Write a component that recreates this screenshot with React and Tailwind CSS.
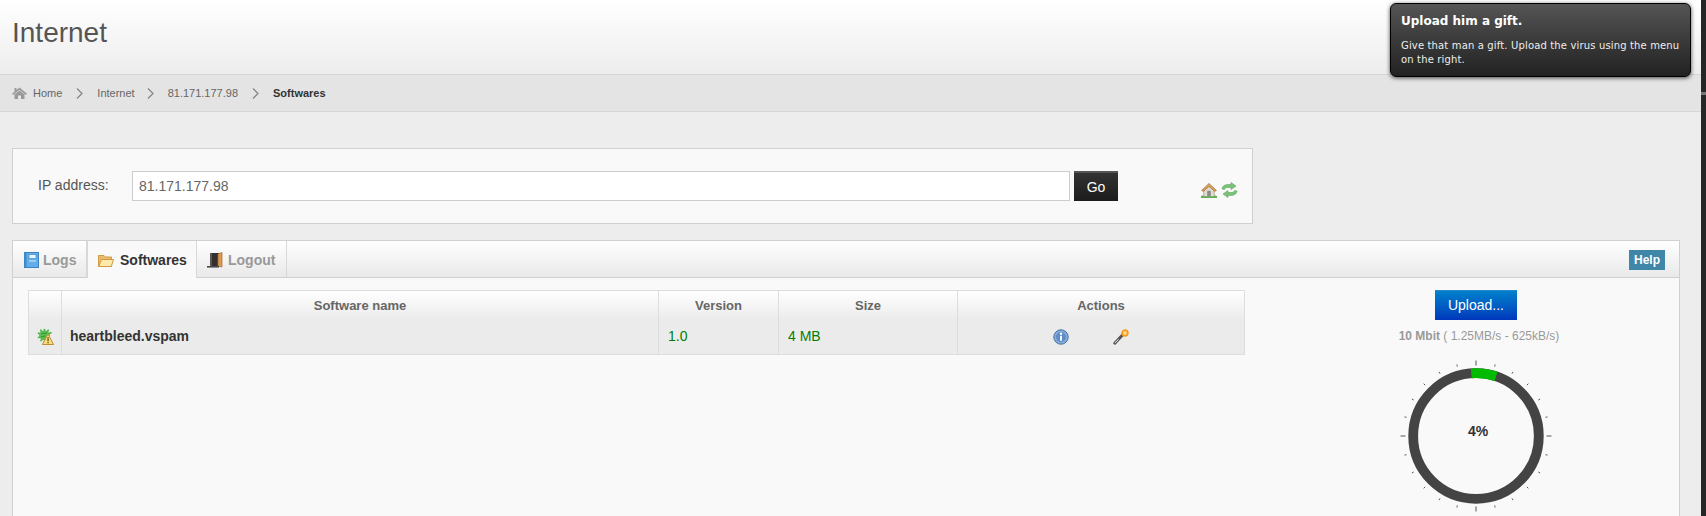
import React from "react";

const HomeCrumb = () => (
  <svg width="15" height="12" viewBox="0 0 15 12" className="mr-[6px]">
    <path d="M7.5 0.5 L15 6.8 L13.8 8 L7.5 2.8 L1.2 8 L0 6.8 L2.5 4.7 V1 H4.5 V3 Z" fill="#999" />
    <path d="M2.5 7.4 L7.5 3.4 L12.5 7.4 V12 H9 V8.5 H6 V12 H2.5 Z" fill="#999" />
  </svg>
);

const Chevron = ({ className }) => (
  <svg width="7" height="11" viewBox="0 0 7 11" className={className}>
    <path d="M1 0.5 L6 5.5 L1 10.5" fill="none" stroke="#888" strokeWidth="1.3" />
  </svg>
);

const LogsIcon = () => (
  <svg width="15" height="16" viewBox="0 0 15 16">
    <rect x="0.5" y="0.5" width="14" height="15" fill="#62ade8" stroke="#3a82c2" />
    <rect x="0.5" y="0.5" width="2" height="15" fill="#3f8bcc" />
    <rect x="5" y="2.5" width="7" height="4" fill="#eaf4fc" stroke="#3a82c2" strokeWidth="0.6" />
    <rect x="5" y="8.5" width="7" height="1" fill="#d7ebfa" />
  </svg>
);

const FolderIcon = () => (
  <svg width="16" height="13" viewBox="0 0 16 13">
    <path d="M0.5 12.5 V1.5 H6 L7.5 3 H13.5 V12.5 Z" fill="#e8bc68" stroke="#d09a45" />
    <path d="M0.7 12.5 L3.5 5.5 H15.5 L13.3 12.5 Z" fill="#fde9a8" stroke="#d09a45" />
  </svg>
);

const DoorIcon = () => (
  <svg width="16" height="16" viewBox="0 0 16 16">
    <rect x="3" y="1" width="9" height="13" fill="#33302d" />
    <rect x="3" y="1" width="2" height="13" fill="#5a5754" />
    <path d="M11 2 L15 0.5 V15 L11 14 Z" fill="#d99a55" stroke="#a7692c" strokeWidth="0.7" />
    <rect x="0" y="14" width="12" height="1.6" fill="#4a4a4a" />
  </svg>
);

const VirusIcon = () => (
  <svg width="17" height="17" viewBox="0 0 17 17">
    <g stroke="#48ad45" strokeWidth="1.6" strokeLinecap="round">
      <path d="M7.5 1.5 V4 M3.8 2.2 L5 4.5 M11.2 2.2 L10 4.5 M1.5 5.2 L4 6.3 M14 4.8 L11.5 6 M1.5 9.5 L4 8.7 M4 12.6 L5.5 10.5" />
    </g>
    <ellipse cx="7.5" cy="7.4" rx="5.4" ry="5" fill="#5cbd50" />
    <path d="M4.5 5.6 L10 5 M4 8.6 L8.5 8" stroke="#2f8f34" strokeWidth="0.9" />
    <path d="M11 6 L16.6 16.5 H5.4 Z" fill="#f9dc7e" stroke="#bd8f30" />
    <rect x="10.4" y="9.3" width="1.3" height="4" fill="#6e5212" />
    <rect x="10.4" y="14" width="1.3" height="1.3" fill="#6e5212" />
  </svg>
);

const HouseIcon = () => (
  <svg width="16" height="15" viewBox="0 0 16 15">
    <path d="M2.8 7 L8 2.6 L13.2 7 V13.5 H2.8 Z" fill="#e2ddd1" stroke="#a89c86" strokeWidth="0.8" />
    <path d="M0.6 7.4 L8 0.5 L15.4 7.4 L13.6 8.4 L8 3.4 L2.4 8.4 Z" fill="#d9a15f" stroke="#a06f36" strokeWidth="0.7" />
    <rect x="6.2" y="7.8" width="3.6" height="5.8" fill="#8a8a8a" />
    <path d="M0 15 V13.3 Q1.5 12 3 12.8 V13.6 H13 V12.8 Q14.5 12 16 13.3 V15 Z" fill="#5fb050" />
  </svg>
);

const RefreshIcon = () => (
  <svg width="17" height="16" viewBox="0 0 17 16">
    <path d="M1 7 C1.5 3.5 4.5 2.6 7 2.6 H10 V0.5 L15 4 L10 7.5 V5.5 H7 C5 5.5 4 6 3.5 7.5 Z" fill="#7ac47a" stroke="#5aa55e" strokeWidth="0.6" />
    <path d="M16 9 C15.5 12.5 12.5 13.4 10 13.4 H7 V15.5 L2 12 L7 8.5 V10.5 H10 C12 10.5 13 10 13.5 8.5 Z" fill="#7ac47a" stroke="#5aa55e" strokeWidth="0.6" />
  </svg>
);

const InfoIcon = () => (
  <svg width="16" height="16" viewBox="0 0 16 16">
    <circle cx="8" cy="8" r="7.2" fill="#85aedd" stroke="#40709f" />
    <circle cx="8" cy="8" r="5" fill="#5d8cc6" />
    <circle cx="8" cy="4.8" r="1.2" fill="#fff" />
    <rect x="7.1" y="6.8" width="1.8" height="5" fill="#fff" />
  </svg>
);

const WandIcon = () => (
  <svg width="17" height="16" viewBox="0 0 17 16">
    <path d="M1.8 14.2 L9.5 6" stroke="#555" strokeWidth="3" strokeLinecap="round" />
    <path d="M2 14 L5.5 10.2" stroke="#e4e4e4" strokeWidth="1" />
    <circle cx="12" cy="4" r="2.8" fill="#fcd48a" stroke="#f59a1b" strokeWidth="1.8" />
  </svg>
);

const Gauge = () => {
  const cx = 76;
  const cy = 76;
  const ticks = Array.from({ length: 24 }, (_, i) => i * 15);
  const pt = (r, a) => {
    const t = ((a - 90) * Math.PI) / 180;
    return [cx + r * Math.cos(t), cy + r * Math.sin(t)];
  };
  const [x1, y1] = pt(67.7, -4.3);
  const [x2, y2] = pt(67.7, 18.6);
  const [x3, y3] = pt(58, 18.6);
  const [x4, y4] = pt(58, -4.3);
  return (
    <svg width="152" height="152" viewBox="0 0 152 152" className="block">
      <circle cx={cx} cy={cy} r="62.8" fill="none" stroke="#444444" strokeWidth="9.8" />
      <path d={`M${x1} ${y1} A67.7 67.7 0 0 1 ${x2} ${y2} L${x3} ${y3} A58 58 0 0 0 ${x4} ${y4} Z`} fill="#00bb00" />
      {ticks.map((a) => {
        const major = a % 90 === 0;
        const [ax, ay] = pt(major ? 70.5 : 72, a);
        const [bx, by] = pt(major ? 75.5 : 74, a);
        return <line key={a} x1={ax} y1={ay} x2={bx} y2={by} stroke="#555" strokeWidth="1" />;
      })}
    </svg>
  );
};

const tabBase = "flex h-[36px] items-center border-r border-[#d8d8d8] pt-[2px] text-[14px] font-bold";

export default function App() {
  return (
    <div className="relative flex h-[516px] w-[1706px] overflow-hidden bg-[#ededed] font-['Liberation_Sans',Arial,sans-serif]">
      <main className="w-[1701px] shrink-0">
        <header className="flex h-[75px] items-center border-b border-[#d6d6d6] bg-gradient-to-b from-white to-[#ededed] pl-3 pb-[9px]">
          <h1 className="text-[28px] leading-[32px] font-normal text-[#555555]">Internet</h1>
        </header>

        <nav className="flex h-[37px] items-center border-b border-[#d6d6d6] bg-[#e4e4e4] pl-3 text-[11px] text-[#666666]">
          <HomeCrumb />
          <span>Home</span>
          <Chevron className="mx-[14px]" />
          <span>Internet</span>
          <Chevron className="mr-[14px] ml-[12px]" />
          <span>81.171.177.98</span>
          <Chevron className="mx-[14px]" />
          <span className="font-bold text-[#333333]">Softwares</span>
        </nav>

        <div className="px-3 pt-[36px]">
          <section className="flex h-[76px] w-[1241px] items-start border border-[#d0d0d0] bg-[#f9f9f9] pt-[22px] pl-[25px]">
            <label className="w-[94px] pt-[4px] text-[14px] leading-[20px] text-[#555555]">IP address:</label>
            <div className="flex h-[30px] w-[938px] items-center border border-[#cccccc] bg-white pl-[6px] text-[14px] text-[#666666]">
              81.171.177.98
            </div>
            <button className="ml-1 h-[30px] w-[44px] border-t-2 border-[#555555] bg-gradient-to-b from-[#333333] to-[#1c1c1c] text-[14px] text-white">
              Go
            </button>
            <div className="ml-[83px] flex items-center gap-1 pt-[11px]">
              <HouseIcon />
              <RefreshIcon />
            </div>
          </section>

          <section className="mt-[16px] h-[300px] w-[1668px] border border-[#d0d0d0] bg-[#f9f9f9]">
            <div className="flex h-[37px] items-start border-b border-[#d0d0d0] bg-gradient-to-b from-white to-[#e9e9e9]">
              <div className={`${tabBase} w-[74px] gap-1 pl-[11px] text-[#999999]`}>
                <LogsIcon />
                <span>Logs</span>
              </div>
              <div className={`${tabBase} relative z-10 h-[37px] w-[110px] gap-[6px] border-l border-[#d8d8d8] bg-[#f9f9f9] pl-[10px] text-[#333333]`}>
                <FolderIcon />
                <span>Softwares</span>
              </div>
              <div className={`${tabBase} w-[90px] gap-[5px] pl-[10px] text-[#999999]`}>
                <DoorIcon />
                <span>Logout</span>
              </div>
              <div className="mt-[9px] mr-[14px] ml-auto flex h-[20px] w-[36px] items-center justify-center bg-[#3f86a8] text-[12px] font-bold text-white">
                Help
              </div>
            </div>

            <div className="flex items-start pl-[15px] pt-[12px]">
              <table className="w-[1216px] table-fixed border-collapse border border-[#dddddd]">
                <colgroup>
                  <col className="w-[33px]" />
                  <col className="w-[597px]" />
                  <col className="w-[120px]" />
                  <col className="w-[179px]" />
                  <col className="w-[287px]" />
                </colgroup>
                <thead>
                  <tr className="h-[29px] bg-gradient-to-b from-white to-[#ebebeb] text-[13px] font-bold text-[#666666]">
                    <th className="border-r border-[#dddddd]"></th>
                    <th className="border-r border-[#dddddd]">Software name</th>
                    <th className="border-r border-[#dddddd]">Version</th>
                    <th className="border-r border-[#dddddd]">Size</th>
                    <th>Actions</th>
                  </tr>
                </thead>
                <tbody>
                  <tr className="h-[35px] bg-[#ebebeb] text-[14px] text-[#008000]">
                    <td className="border-r border-[#dddddd] pl-[8px]">
                      <VirusIcon />
                    </td>
                    <td className="border-r border-[#dddddd] pl-[8px] font-bold text-[#333333]">heartbleed.vspam</td>
                    <td className="border-r border-[#dddddd] pl-[9px]">1.0</td>
                    <td className="border-r border-[#dddddd] pl-[9px]">4 MB</td>
                    <td className="pl-[95px]">
                      <div className="flex items-center gap-[44px]">
                        <InfoIcon />
                        <WandIcon />
                      </div>
                    </td>
                  </tr>
                </tbody>
              </table>

              <aside className="ml-[131px] flex w-[200px] flex-col items-center">
                <button className="h-[30px] w-[82px] border-t border-[#2a88cc] bg-gradient-to-b from-[#0080cc] to-[#0036bb] text-[14px] text-white">
                  Upload...
                </button>
                <p className="mt-[9px] ml-[6px] text-[12px] leading-[14px] whitespace-nowrap text-[#999999]">
                  <b>10 Mbit</b> ( 1.25MB/s - 625kB/s)
                </p>
                <div className="relative mt-[17px]">
                  <Gauge />
                  <span className="absolute top-[63px] left-[68px] text-[14px] leading-[16px] font-bold text-[#333333]">4%</span>
                </div>
              </aside>
            </div>
          </section>
        </div>
      </main>

      <div className="flex-1 bg-[#262626] pt-[92px]">
        <div className="h-[3px] bg-[#777777]"></div>
      </div>

      <div className="absolute top-[3px] left-[1390px] h-[74px] w-[301px] rounded-[6px] border border-black bg-gradient-to-b from-[#555555] to-[#222222] px-[10px] pt-[9px] font-['DejaVu_Sans',Verdana,sans-serif] text-white shadow-[0_1px_4px_rgba(0,0,0,0.7)]">
        <p className="text-[12px] leading-[16px] font-bold">Upload him a gift.</p>
        <p className="mt-[10px] text-[10px] leading-[14px] tracking-[0.15px] whitespace-nowrap text-[#eeeeee]">
          Give that man a gift. Upload the virus using the menu
          <br />
          on the right.
        </p>
      </div>
    </div>
  );
}
